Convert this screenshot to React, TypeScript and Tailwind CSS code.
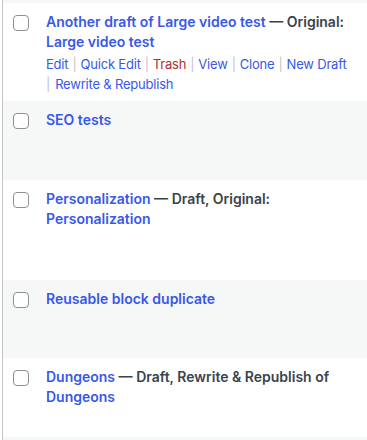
import React from 'react';

type Row = {
  title: string;
  state?: string;
  original?: string;
  height: string;
  striped: boolean;
  actions?: boolean;
};

const rows: Row[] = [
  { title: 'Another draft of Large video test', state: ' — Original: ', original: 'Large video test', height: 'h-[98px]', striped: false, actions: true },
  { title: 'SEO tests', height: 'h-[79px]', striped: true },
  { title: 'Personalization', state: ' — Draft, Original: ', original: 'Personalization', height: 'h-[100px]', striped: false },
  { title: 'Reusable block duplicate', height: 'h-[78px]', striped: true },
  { title: 'Dungeons', state: ' — Draft, Rewrite & Republish of ', original: 'Dungeons', height: 'h-[79px]', striped: false },
];

function Sep() {
  return <span className="text-[#c3c4c7] px-[4px]">|</span>;
}

function Actions() {
  const link = 'text-[#3858e9]';
  return (
    <div className="text-[13px] leading-[20px] mt-[2px] whitespace-nowrap tracking-[-0.2px]">
      <a className={link}>Edit</a>
      <Sep />
      <a className={link}>Quick Edit</a>
      <Sep />
      <a className="text-[#b32d2e]">Trash</a>
      <Sep />
      <a className={link}>View</a>
      <Sep />
      <a className={link}>Clone</a>
      <Sep />
      <a className={link}>New Draft</a>
      <br />
      <span className="text-[#c3c4c7] pr-[5px]">|</span>
      <a className={link}>Rewrite &amp; Republish</a>
    </div>
  );
}

export default function App() {
  return (
    <div
      className="w-[367px] h-[440px] bg-white overflow-hidden"
      style={{ fontFamily: 'Inter, "Liberation Sans", sans-serif' }}
    >
      <div className="ml-[2px] h-full border-l border-[#c3c4c7] flex flex-col">
        <div className="h-[3px] bg-[#f6f7f7]" />
        {rows.map((row) => (
          <div
            key={row.title}
            className={`flex ${row.height} ${row.striped ? 'bg-[#f6f7f7]' : 'bg-white'}`}
          >
            <div className="w-[43px] flex-shrink-0 pt-[12px] pl-[10px]">
              <div className="w-[16px] h-[16px] rounded-[4px] border border-[#8c8f94] bg-white" />
            </div>
            <div className="flex-1 pt-[9px] pr-[10px]">
              <div className="text-[14px] leading-[20px] font-semibold text-[#3c434a]">
                <a className="text-[#3858e9]">{row.title}</a>
                {row.state}
                {row.original && <a className="text-[#3858e9]">{row.original}</a>}
              </div>
              {row.actions && <Actions />}
            </div>
          </div>
        ))}
        <div className="flex-1 bg-[#f6f7f7]" />
      </div>
    </div>
  );
}
